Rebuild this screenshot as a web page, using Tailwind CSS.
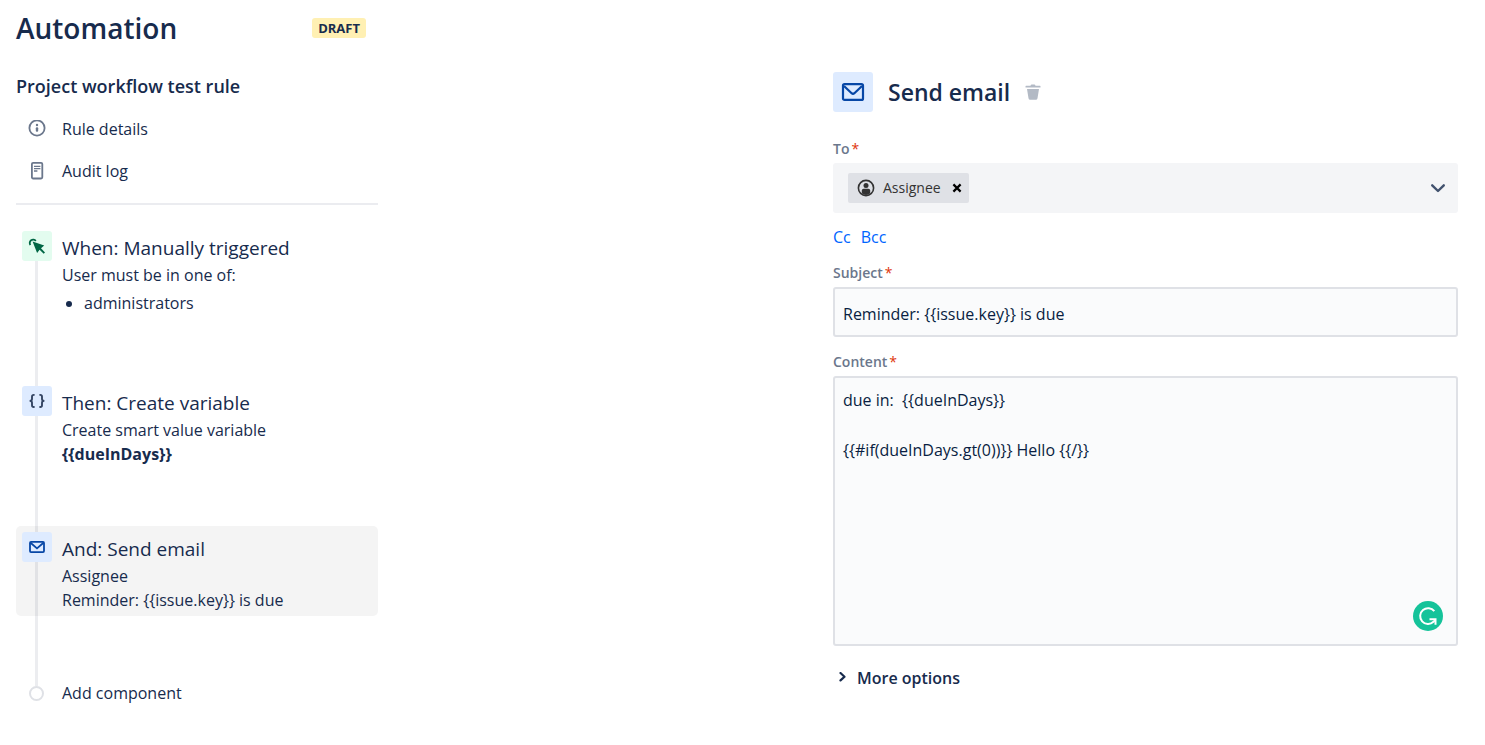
<!DOCTYPE html>
<html lang="en">
<head>
    <meta charset="UTF-8">
    <meta name="viewport" content="width=device-width, initial-scale=1.0">
    <title>Automation - Project workflow test rule</title>
    <script src="https://cdn.jsdelivr.net/npm/@tailwindcss/browser@4"></script>
</head>
<body class="bg-white font-['Open_Sans',sans-serif] text-base text-[#172b4d]">
    <div class="flex justify-between gap-8 pl-4 pr-[27px]">

        <!-- Rule sidebar -->
        <aside class="w-[362px] shrink-0">
            <header class="flex items-center justify-between h-14 pr-3">
                <h1 class="text-[28px] font-semibold">Automation</h1>
                <span class="rounded-[3px] bg-[#fff0b3] px-[6px] text-[13px] leading-5 font-bold">DRAFT</span>
            </header>

            <h2 class="mt-4 text-lg leading-7 font-semibold">Project workflow test rule</h2>

            <nav class="mt-2 border-b-2 border-[#ebecf0] pb-[11px]">
                <a href="#details" class="flex items-center h-[42px] pl-3">
                    <svg class="w-[18px] h-[18px] mr-4" viewBox="0 0 18 18" fill="none" aria-hidden="true">
                        <circle cx="9" cy="8" r="7.6" stroke="#6b778c" stroke-width="1.8"/>
                        <circle cx="9" cy="5" r="1.2" fill="#6b778c"/>
                        <rect x="7.8" y="7.2" width="2.4" height="4.6" rx="1" fill="#6b778c"/>
                    </svg>
                    Rule details
                </a>
                <a href="#audit" class="flex items-center h-[42px] pl-3">
                    <svg class="w-[18px] h-[18px] mr-4" viewBox="0 0 18 18" fill="none" aria-hidden="true">
                        <rect x="3.9" y="0.9" width="10.4" height="15.6" rx="1.2" stroke="#6b778c" stroke-width="1.8"/>
                        <path d="M6 4.4h6.4M6 6.6h6.4M6 9h3.4" stroke="#6b778c" stroke-width="1.4"/>
                    </svg>
                    Audit log
                </a>
            </nav>

            <ol class="relative mt-5 flex flex-col gap-14">
                <li class="absolute left-[19px] top-9 bottom-7 w-[3px] bg-[#091e42]/8" aria-hidden="true"></li>

                <li class="flex pl-[6px] pt-[6px] pb-1">
                    <span class="relative flex items-center justify-center w-[30px] h-[30px] shrink-0 rounded-[3px] bg-[#e3fcef]">
                        <svg class="w-5 h-5" viewBox="0 0 20 20" fill="none" aria-hidden="true">
                            <path d="M3.4 9A3.3 3.3 0 1 1 8.8 5" stroke="#006644" stroke-width="1.8"/>
                            <path d="M5.6 5.4l11.6 4.2-3.2 2.600 4 4.200-1.300 1.300-4.100-4-2.500 3.300z" fill="#006644"/>
                        </svg>
                    </span>
                    <div class="pl-[10px] pt-[2px]">
                        <h3 class="text-[19px] leading-[30px]">When: Manually triggered</h3>
                        <p class="leading-6">User must be in one of:</p>
                        <ul class="mt-1 mb-[5px] list-disc pl-[22px] leading-6">
                            <li>administrators</li>
                        </ul>
                    </div>
                </li>

                <li class="flex pl-[6px] pt-[6px] pb-1">
                    <span class="relative flex items-center justify-center w-[30px] h-[30px] shrink-0 rounded-[3px] bg-[#deebff]">
                        <svg class="w-5 h-5" viewBox="0 0 20 20" fill="none" stroke="#344563" stroke-width="1.9" aria-hidden="true">
                            <path d="M7.6 3.9H6.8Q5 3.9 5 5.7V8Q5 9.9 2.6 9.9Q5 9.9 5 11.8V14.2Q5 16 6.8 16H7.6"/>
                            <path d="M12.4 3.9h.8Q15 3.9 15 5.7V8Q15 9.9 17.4 9.9Q15 9.9 15 11.8V14.2Q15 16 13.2 16H12.4"/>
                        </svg>
                    </span>
                    <div class="pl-[10px] pt-[2px]">
                        <h3 class="text-[19px] leading-[30px]">Then: Create variable</h3>
                        <p class="leading-6">Create smart value variable</p>
                        <p class="leading-6 font-bold">{{dueInDays}}</p>
                    </div>
                </li>

                <li class="flex rounded-[5px] bg-[#f4f4f4] pl-[6px] pt-[6px] pb-1">
                    <span class="relative flex items-center justify-center w-[30px] h-[30px] shrink-0 rounded-[3px] bg-[#deebff]">
                        <svg class="w-4 h-3" viewBox="0 0 16 12" fill="none" stroke="#0747a6" stroke-width="1.8" aria-hidden="true">
                            <rect x="1" y="0.9" width="14" height="10.2" rx="1"/>
                            <path d="M1.5 1.8L8 7.4l6.5-5.6"/>
                        </svg>
                    </span>
                    <div class="pl-[10px] pt-[2px]">
                        <h3 class="text-[19px] leading-[30px]">And: Send email</h3>
                        <p class="leading-6">Assignee</p>
                        <p class="leading-6">Reminder: {{issue.key}} is due</p>
                    </div>
                </li>

                <li>
                    <button type="button" class="flex items-center h-[42px] pl-[13px]">
                        <span class="relative w-[15px] h-[15px] mr-[18px] rounded-full border-2 border-[#dfe1e6] bg-white"></span>
                        Add component
                    </button>
                </li>
            </ol>
        </aside>

        <!-- Action form -->
        <main class="w-full max-w-[625px] pt-[72px]">
            <div class="flex items-center">
                <span class="flex items-center justify-center w-10 h-10 rounded-[3px] bg-[#deebff]">
                    <svg class="w-6 h-[18px]" viewBox="0 0 24 18" fill="none" stroke="#0747a6" stroke-width="2.2" aria-hidden="true">
                        <rect x="2" y="1.1" width="20" height="15.8" rx="1.5"/>
                        <path d="M3 3l7.6 7.2q1.4 1.2 2.8 0L21 3"/>
                    </svg>
                </span>
                <h2 class="ml-[15px] text-[23px] font-semibold">Send email</h2>
                <button type="button" class="ml-[15px]" aria-label="Delete component">
                    <svg class="w-4 h-4" viewBox="0 0 16 16" fill="#b3bac5" aria-hidden="true">
                        <path d="M1 1.8h4.5q.3-1.3 1.3-1.3h2.4q1 0 1.3 1.3H15q.5 0 .5.6v1.1H.5V2.4q0-.6.5-.6z"/>
                        <path d="M2 5h12l-1.5 9.3q-.2 1.5-1.7 1.5H5.2q-1.5 0-1.7-1.5z"/>
                    </svg>
                </button>
            </div>

            <form class="mt-[25px]">
                <div id="to-label" class="pb-[3px] text-sm leading-[23px] font-semibold text-[#6b778c]">To<span class="ml-[2px] font-normal text-[#de350b]">*</span></div>
                <div class="flex items-center justify-between h-[50px] rounded-[3px] bg-[#f4f5f7] pl-[15px] pr-3" role="group" aria-labelledby="to-label">
                    <span class="flex items-center h-[30px] rounded-[2px] bg-[#dfe1e6] pl-[9px] pr-[7px] text-sm text-[#333333]">
                        <svg class="w-[18px] h-[18px] mr-2" viewBox="0 0 18 18" fill="none" aria-hidden="true">
                            <circle cx="9" cy="9" r="7.6" stroke="#333" stroke-width="1.6"/>
                            <circle cx="9" cy="6.4" r="2.5" fill="#333"/>
                            <path d="M4.8 11.5q0-1.8 1.8-1.8h4.8q1.8 0 1.8 1.8v2.7Q11.5 16 9 16t-4.2-1.8z" fill="#333"/>
                        </svg>
                        Assignee
                        <button type="button" class="ml-[11px]" aria-label="Remove Assignee">
                            <svg class="w-[10px] h-[10px]" viewBox="0 0 10 10" stroke="#000" stroke-width="2.2" aria-hidden="true"><path d="M1.4 1.4l7.2 7.2M8.6 1.4l-7.2 7.2"/></svg>
                        </button>
                    </span>
                    <button type="button" aria-label="Show recipients">
                        <svg class="w-4 h-4" viewBox="0 0 16 16" fill="none" stroke="#42526e" stroke-width="2.4" stroke-linecap="round" stroke-linejoin="round" aria-hidden="true"><path d="M2.2 5.3L8 11l5.8-5.7"/></svg>
                    </button>
                </div>

                <div class="mt-3 flex gap-[10px] leading-6 text-[#0065ff]">
                    <a href="#cc">Cc</a>
                    <a href="#bcc">Bcc</a>
                </div>

                <label for="subject" class="mt-3 block pb-[3px] text-sm leading-[23px] font-semibold text-[#6b778c]">Subject<span class="ml-[2px] font-normal text-[#de350b]">*</span></label>
                <input id="subject" type="text" value="Reminder: {{issue.key}} is due" class="block w-full h-[50px] rounded-[3px] border-2 border-[#dfe1e6] bg-[#fafbfc] px-2 pt-1 text-[#091e42]">

                <label for="content" class="mt-[13px] block pb-[3px] text-sm leading-[23px] font-semibold text-[#6b778c]">Content<span class="ml-[2px] font-normal text-[#de350b]">*</span></label>
                <div class="relative">
                    <textarea id="content" rows="10" class="block w-full h-[270px] resize-none rounded-[3px] border-2 border-[#dfe1e6] bg-[#fafbfc] px-2 py-[10px] leading-[25px] text-[#091e42]">due in:  {{dueInDays}}

{{#if(dueInDays.gt(0))}} Hello {{/}}</textarea>
                    <button type="button" class="absolute right-[15px] bottom-[15px]" aria-label="Grammarly">
                        <svg class="w-[30px] h-[30px]" viewBox="0 0 30 30" fill="none" aria-hidden="true">
                            <circle cx="15" cy="15" r="15" fill="#15c39a"/>
                            <path d="M21.3 10.2A7.9 7.9 0 1 0 20.5 20.8L22.3 18.8" stroke="#fff" stroke-width="2"/>
                            <path d="M16.5 18.2h6v5.6" stroke="#fff" stroke-width="2"/>
                        </svg>
                    </button>
                </div>

                <button type="button" class="mt-[18px] flex items-center pl-[5px] text-base leading-7 font-semibold">
                    <svg class="w-[9px] h-3 mr-[10px]" viewBox="0 0 9 12" fill="none" stroke="#172b4d" stroke-width="2.2" stroke-linecap="round" stroke-linejoin="round" aria-hidden="true"><path d="M2.5 1l4 3.7-4 3.7"/></svg>
                    More options
                </button>
            </form>
        </main>
    </div>
</body>
</html>
